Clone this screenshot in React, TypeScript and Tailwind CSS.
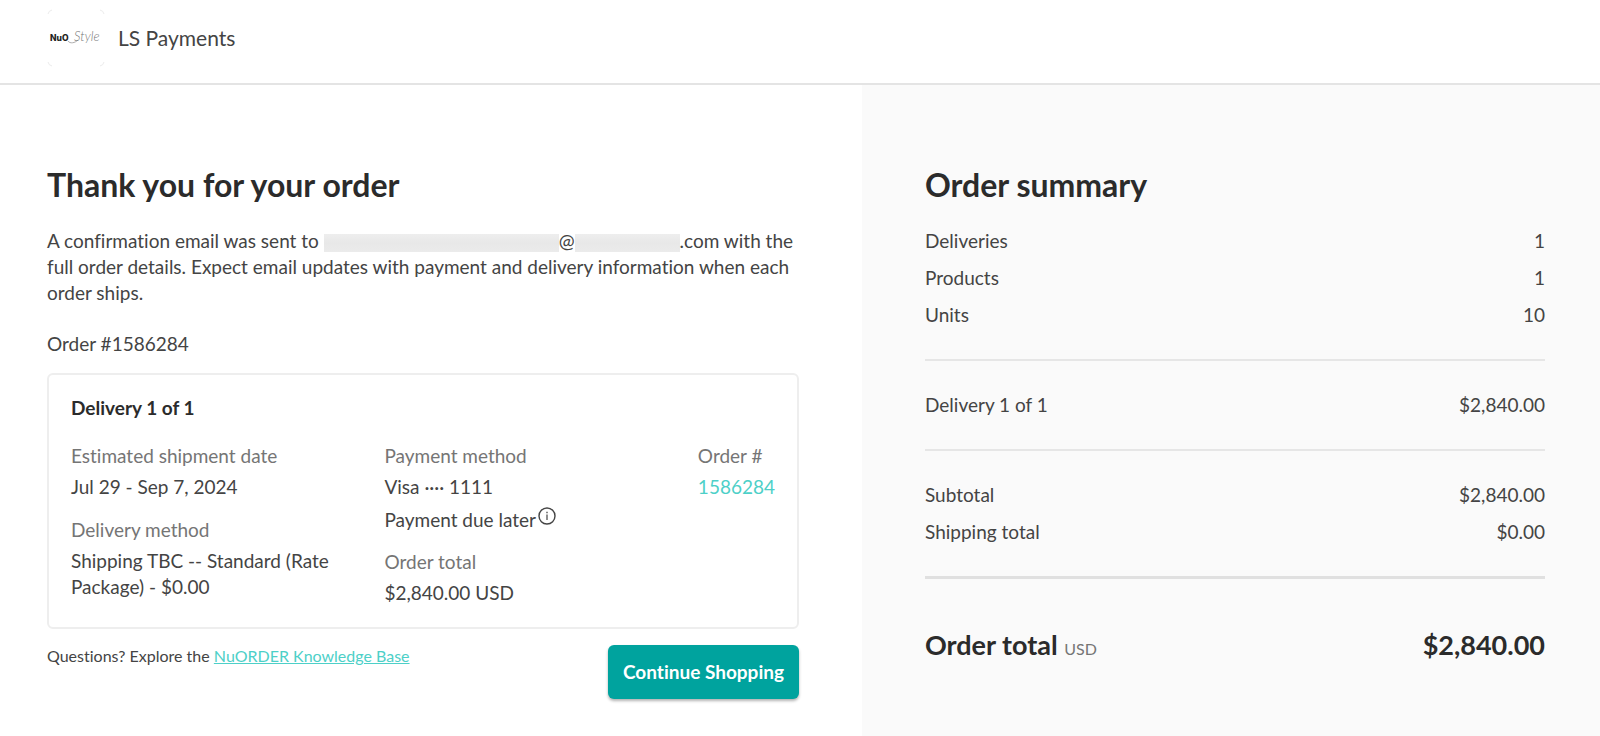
import React from 'react';
import { clsx } from 'clsx';

const Logo: React.FC = () => (
    <svg viewBox="0 0 58 58" className="w-[58px] h-[58px] shrink-0" role="img" aria-label="NuO Style">
        <path d="M1 5a5 5 0 0 1 4-4M53 1a5 5 0 0 1 4 4M57 53a5 5 0 0 1-4 4M5 57a5 5 0 0 1-4-4" fill="none" stroke="#ececec" />
        <text x="3" y="32" fontFamily="Inter, sans-serif" fontWeight="800" fontSize="8.500" fill="#222">NuO</text>
        <path d="M21 32c2 3 7 2 10-1" fill="none" stroke="#999" strokeWidth="0.8" />
        <text x="27" y="32" fontFamily="Lato, sans-serif" fontWeight="300" fontStyle="italic" fontSize="13" fill="#777">Style</text>
    </svg>
);

const InfoIcon: React.FC = () => (
    <svg viewBox="0 0 18 18" className="w-[18px] h-[18px]" fill="none" stroke="#444" aria-hidden="true">
        <circle cx="9" cy="9" r="8" strokeWidth="1.4" />
        <path d="M9 7.500v5.500" strokeWidth="1.2" />
        <path d="M9 4.800v1.500" strokeWidth="1.3" />
    </svg>
);

const Redacted: React.FC<{ className: string }> = ({ className }) => (
    <span className={clsx('inline-block h-[18px] align-[-4px] bg-linear-to-b from-[#eeeeee] via-[#e8e8e8] to-[#ebebeb]', className)} />
);

const Field: React.FC<{ label: string; children: React.ReactNode }> = ({ label, children }) => (
    <div>
        <dt className="text-[#757575]">{label}</dt>
        <dd className="mt-[5px]">{children}</dd>
    </div>
);

const SummaryRow: React.FC<{ label: string; value: string }> = ({ label, value }) => (
    <div className="flex justify-between">
        <dt>{label}</dt>
        <dd>{value}</dd>
    </div>
);

const App: React.FC = () => {
    return (
        <div className="min-h-screen flex flex-col bg-white font-['Lato',sans-serif] text-[19px] leading-[26px] text-[#444444] [font-variant-ligatures:none]">
            <header className="flex items-center gap-[13px] px-[47px] pt-[9px] pb-4 border-b-2 border-[#e4e4e4]">
                <Logo />
                <span className="text-[21px]">LS Payments</span>
            </header>

            <div className="grow grid grid-cols-[862fr_738fr]">
                <main className="pl-[47px] pr-[63px] pt-[79px] pb-9">
                    <h1 className="text-[32px] leading-[42px] font-bold text-[#2b2b2b]">Thank you for your order</h1>
                    <p className="mt-[22px]">
                        A confirmation email was sent to <Redacted className="w-[235px]" />@<Redacted className="w-[105px]" />
                        .com with the full order details. Expect email updates with payment and delivery information when each
                        order ships.
                    </p>
                    <p className="mt-[25px]">Order #1586284</p>

                    <section className="mt-4 px-[22px] pt-5 pb-[21px] border-2 border-[#eeeeee] rounded-md">
                        <h2 className="font-bold text-[#2b2b2b]">Delivery 1 of 1</h2>
                        <div className="mt-[22px] grid grid-cols-[1fr_1fr_auto]">
                            <dl className="flex flex-col gap-[17px]">
                                <Field label="Estimated shipment date">Jul 29 - Sep 7, 2024</Field>
                                <Field label="Delivery method">Shipping TBC -- Standard (Rate Package) - $0.00</Field>
                            </dl>
                            <dl className="flex flex-col gap-4">
                                <Field label="Payment method">
                                    <div>Visa ···· 1111</div>
                                    <div className="mt-[7px] flex gap-[2px]">
                                        Payment due later
                                        <button type="button" aria-label="Payment details" className="self-start">
                                            <InfoIcon />
                                        </button>
                                    </div>
                                </Field>
                                <Field label="Order total">$2,840.00 USD</Field>
                            </dl>
                            <dl>
                                <Field label="Order #">
                                    <a href="#order" className="text-[#4dd0c8]">1586284</a>
                                </Field>
                            </dl>
                        </div>
                    </section>

                    <div className="mt-4 flex justify-between items-start">
                        <p className="text-[16px] leading-[22px]">
                            Questions? Explore the{' '}
                            <a href="#help" className="text-[#4dd0c8] underline">NuORDER Knowledge Base</a>
                        </p>
                        <button
                            type="button"
                            className="h-[54px] px-[15px] rounded-md bg-[#00a39e] text-white text-[19px] font-bold whitespace-nowrap shadow-[0_2px_3px_rgba(0,0,0,0.3)]"
                        >
                            Continue Shopping
                        </button>
                    </div>
                </main>

                <aside className="bg-[#fafafa] pl-[63px] pr-[55px] pt-[79px]">
                    <h2 className="text-[32px] leading-[42px] font-bold text-[#2b2b2b]">Order summary</h2>
                    <dl className="mt-[22px] flex flex-col gap-[11px]">
                        <SummaryRow label="Deliveries" value="1" />
                        <SummaryRow label="Products" value="1" />
                        <SummaryRow label="Units" value="10" />
                    </dl>
                    <dl className="mt-[31px] py-[31px] border-y-2 border-[#e6e6e6]">
                        <SummaryRow label="Delivery 1 of 1" value="$2,840.00" />
                    </dl>
                    <dl className="py-[31px] flex flex-col gap-[11px] border-b-3 border-[#e0e0e0]">
                        <SummaryRow label="Subtotal" value="$2,840.00" />
                        <SummaryRow label="Shipping total" value="$0.00" />
                    </dl>
                    <div className="mt-12 flex justify-between text-[27px] leading-9 font-bold text-[#2b2b2b]">
                        <div>
                            Order total <span className="text-[16px] font-normal text-[#757575]">USD</span>
                        </div>
                        <div>$2,840.00</div>
                    </div>
                </aside>
            </div>
        </div>
    );
};

export default App;
